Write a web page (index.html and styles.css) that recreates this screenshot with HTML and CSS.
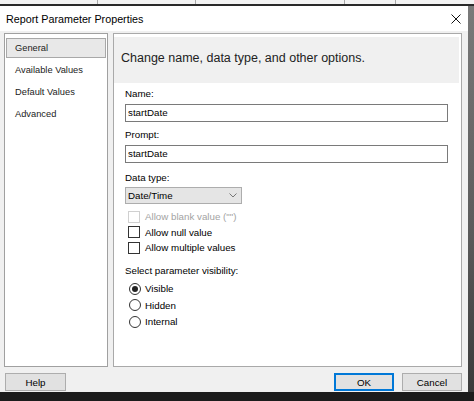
FILE: index.html
```html
<!DOCTYPE html>
<html>
<head>
<meta charset="utf-8">
<link rel="stylesheet" href="styles.css">
</head>
<body>
<div class="screen">
  <div class="bgtop">
    <span class="seg s1"></span><span class="seg s2"></span><span class="seg s3"></span><span class="seg s4"></span><span class="seg s5"></span>
  </div>
  <div class="bgline"></div>
  <div class="mid">
    <div class="dialog">
      <div class="titlebar">
        <span class="title">Report Parameter Properties</span>
        <svg class="close" width="10" height="10" viewBox="0 0 10 10"><path d="M0.5 0.5L9.5 9.5M9.5 0.5L0.5 9.5" stroke="#111" stroke-width="1" fill="none"/></svg>
      </div>
      <div class="body">
        <div class="main">
          <ul class="nav">
            <li class="sel">General</li>
            <li>Available Values</li>
            <li>Default Values</li>
            <li>Advanced</li>
          </ul>
          <div class="panel">
            <div class="header">Change name, data type, and other options.</div>
            <div class="form">
              <div class="label l-name">Name:</div>
              <div class="input">startDate</div>
              <div class="label l-prompt">Prompt:</div>
              <div class="input">startDate</div>
              <div class="label l-type">Data type:</div>
              <div class="select"><span>Date/Time</span><svg width="8" height="5" viewBox="0 0 8 5"><path d="M0.5 0.5L4 4L7.5 0.5" fill="none" stroke="#777" stroke-width="1"/></svg></div>
              <div class="checks">
                <div class="row disabled"><span class="box"></span><span>Allow blank value ("")</span></div>
                <div class="row"><span class="box"></span><span>Allow null value</span></div>
                <div class="row"><span class="box"></span><span>Allow multiple values</span></div>
              </div>
              <div class="label l-vis">Select parameter visibility:</div>
              <div class="radios">
                <div class="row rrow"><span class="radio on"></span><span>Visible</span></div>
                <div class="row rrow"><span class="radio"></span><span>Hidden</span></div>
                <div class="row rrow"><span class="radio"></span><span>Internal</span></div>
              </div>
            </div>
          </div>
        </div>
        <div class="buttons">
          <div class="btn help">Help</div>
          <div class="btn ok">OK</div>
          <div class="btn cancel">Cancel</div>
        </div>
      </div>
    </div>
    <div class="rightbar"></div>
  </div>
  <div class="bgbottom"></div>
</div>
</body>
</html>
```
FILE: styles.css
```css
* { box-sizing: border-box; }
html, body { margin: 0; padding: 0; background: #1c1c1c; }
body { font-family: "Liberation Sans", Arial, sans-serif; }

.screen {
  width: 474px;
  height: 401px;
  display: flex;
  flex-direction: column;
  overflow: hidden;
  background: #1c1c1c;
}

.bgtop {
  height: 4px;
  display: flex;
  background: #f3f3f3;
}
.bgtop .seg { height: 4px; border-right: 1px solid #a8a8a8; }
.bgtop .s1 { width: 98px; }
.bgtop .s2 { width: 98px; }
.bgtop .s3 { width: 149px; }
.bgtop .s4 { width: 51px; }
.bgtop .s5 { flex: 1; border-right: none; }

.bgline { height: 2px; background: #2a2a2a; }

.mid { height: 386px; display: flex; }

.dialog {
  width: 468px;
  display: flex;
  flex-direction: column;
  background: #f0f0f0;
}

.rightbar {
  flex: 1;
  background: linear-gradient(#7a7a7a, #5a5a5a 60%, #3a3a3a);
}

.bgbottom { flex: 1; background: #1c1c1c; }

.titlebar {
  height: 25px;
  background: #ffffff;
  display: flex;
  align-items: center;
  justify-content: space-between;
  padding: 0 7px 0 6px;
  font-size: 10.75px;
  color: #000;
}
.close { display: block; }

.body {
  flex: 1;
  display: flex;
  flex-direction: column;
  padding: 2px 6px 0 4px;
}

.main { height: 334px; display: flex; gap: 5px; }

.nav {
  width: 104px;
  margin: 0;
  padding: 3.5px 0 0 0;
  list-style: none;
  background: #ffffff;
  border: 1px solid #a0a0a0;
  font-size: 9.3px;
  color: #222;
}
.nav li {
  height: 20px;
  margin: 0 1px 2px 1px;
  padding-left: 8px;
  border: 1px solid transparent;
  line-height: 18px;
  white-space: nowrap;
}
.nav li.sel {
  background: #e8e8e8;
  border-color: #a8a8a8;
}

.panel {
  flex: 1;
  display: flex;
  flex-direction: column;
  background: #ffffff;
  border: 1px solid #a9a9a9;
}

.header {
  height: 46px;
  margin: 3px 2px 0 0;
  padding: 0 0 4px 7px;
  display: flex;
  align-items: center;
  background: #f0f0f0;
  font-size: 12.5px;
  color: #222;
}

.form {
  padding-left: 11px;
  font-size: 9.75px;
  color: #000;
}

.label { height: 14px; line-height: 14px; white-space: nowrap; }
.l-name { margin-top: 4px; }
.l-prompt { margin-top: 6px; }
.l-type { margin-top: 8px; }
.l-vis { margin-top: 8.5px; }

.input {
  width: 323px;
  height: 18px;
  margin-top: 3px;
  padding-left: 2px;
  border: 1px solid #7a7a7a;
  line-height: 16px;
  background: #fff;
}

.select {
  width: 117px;
  height: 17px;
  margin-top: 2px;
  padding: 0 4px 0 2px;
  display: flex;
  align-items: center;
  justify-content: space-between;
  background: #e5e5e5;
  border: 1px solid #adadad;
}
.select svg { display: block; }

.checks { margin-top: 5px; }
.row {
  height: 15.5px;
  display: flex;
  align-items: center;
  gap: 5px;
  padding-left: 3px;
  white-space: nowrap;
}
.box {
  width: 12px;
  height: 12px;
  border: 1px solid #333;
  background: #fff;
  flex: none;
}
.row.disabled { color: #a3a3a3; }
.row.disabled .box { border-color: #d0d0d0; }

.radios { margin-top: 2.25px; }
.rrow { height: 16.5px; padding-left: 4px; gap: 4px; }
.radio {
  width: 12px;
  height: 12px;
  border: 1px solid #333;
  border-radius: 50%;
  background: #fff;
  flex: none;
  display: flex;
  align-items: center;
  justify-content: center;
}
.radio.on::after {
  content: "";
  width: 6px;
  height: 6px;
  border-radius: 50%;
  background: #222;
}

.buttons {
  height: 18px;
  margin-top: 6px;
  display: flex;
  gap: 8px;
}
.btn {
  height: 18px;
  width: 60px;
  display: flex;
  align-items: center;
  justify-content: center;
  background: #e1e1e1;
  border: 1px solid #adadad;
  font-size: 9.75px;
  color: #000;
}
.btn.help { width: 61px; margin-left: 1px; margin-right: auto; }
.btn.ok {
  border-color: #0078d7;
  box-shadow: inset 0 0 0 1px #0078d7;
}
```
